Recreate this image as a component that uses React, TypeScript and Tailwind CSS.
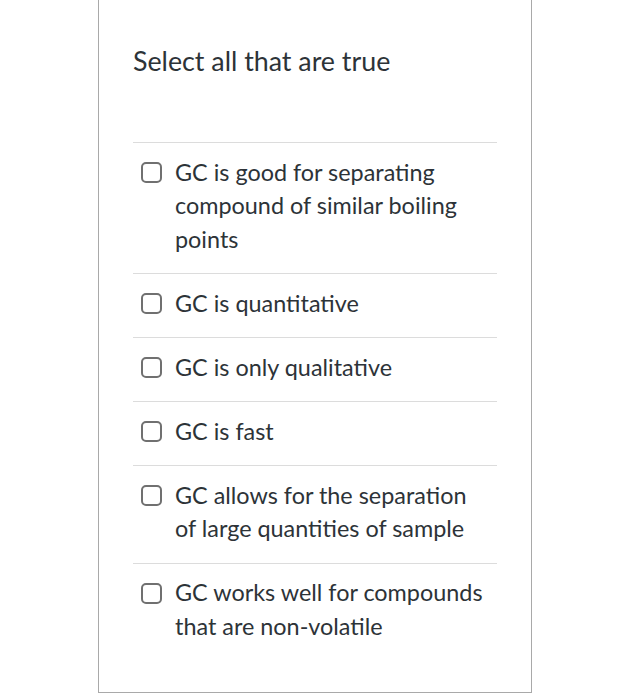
import React from "react";

const options = [
  ["GC is good for separating", "compound of similar boiling", "points"],
  ["GC is quantitative"],
  ["GC is only qualitative"],
  ["GC is fast"],
  ["GC allows for the separation", "of large quantities of sample"],
  ["GC works well for compounds", "that are non-volatile"],
];

export default function App() {
  return (
    <div className="w-[631px] h-[700px] bg-white" style={{ fontFamily: "Lato, 'Open Sans', sans-serif" }}>
      <div className="ml-[98px] w-[434px] h-[693px] border-x border-b border-[#a9a9a9] px-[34px] text-[#2d3338]">
        <div className="pt-[44px] text-[26.8px] leading-[34px]">Select all that are true</div>
        <div className="mt-[64px]">
          {options.map((lines, i) => (
            <div key={i} className="flex border-t border-[#dcdcdc] pt-[12.5px] pb-[17px]">
              <div className="ml-[8px] mt-[6.5px] w-[21px] h-[21px] shrink-0 rounded-[5px] border-2 border-[#707070]" />
              <div className="ml-[13px] text-[23.4px] leading-[33.5px]">
                {lines.map((l, j) => (
                  <div key={j} className="whitespace-nowrap">{l}</div>
                ))}
              </div>
            </div>
          ))}
        </div>
      </div>
    </div>
  );
}
